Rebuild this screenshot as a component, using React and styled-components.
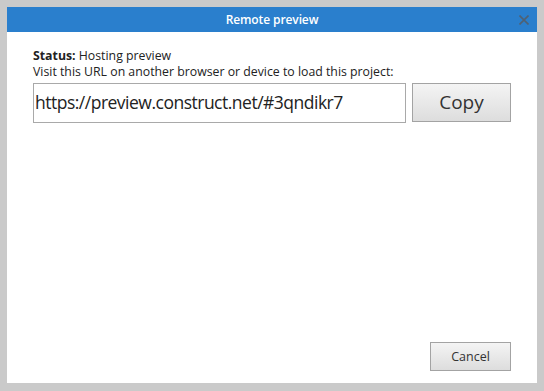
import React from "react";
import styled, { createGlobalStyle } from "styled-components";

const Global = createGlobalStyle`
  html, body { margin: 0; padding: 0; background: #cacaca; }
  body { font-family: "Open Sans", "Noto Sans", sans-serif; }
  #root { padding: 7px 7px 8px 7px; }
`;

const Dialog = styled.div`
  width: 530px;
  height: 376px;
  background: #ffffff;
  display: flex;
  flex-direction: column;
`;

const TitleBar = styled.div`
  height: 25px;
  background: #2a7fcd;
  display: flex;
  align-items: center;
  justify-content: center;
  position: relative;
  color: #ffffff;
  font-size: 12px;
  font-weight: 600;
  letter-spacing: -0.1px;
`;

const Close = styled.span`
  position: absolute;
  right: 8px;
  top: 8px;
  width: 10px;
  height: 10px;
  display: flex;
  cursor: pointer;
`;

const Body = styled.div`
  flex: 1;
  display: flex;
  flex-direction: column;
  padding: 16px 26px 12px 26px;
`;

const Line = styled.div`
  font-size: 12.3px;
  line-height: 16px;
  color: #222;
  white-space: nowrap;
`;

const Label = styled.b`
  font-weight: 700;
`;

const UrlRow = styled.div`
  display: flex;
  gap: 6px;
  margin-top: 3px;
  align-items: flex-start;
`;

const UrlInput = styled.input`
  width: 373px;
  height: 40px;
  box-sizing: border-box;
  border: 1px solid #a9a9a9;
  padding: 0 0 3px 1px;
  font-family: "Open Sans", "Noto Sans", sans-serif;
  font-size: 17.5px;
  letter-spacing: -0.5px;
  color: #222;
  outline: none;
  margin: 0;
`;

const Button = styled.button`
  box-sizing: border-box;
  width: ${(p) => p.$w}px;
  height: ${(p) => p.$h}px;
  border: 1px solid #a3a3a3;
  background: linear-gradient(#f4f4f4, #dddddd);
  font-family: "Open Sans", "Noto Sans", sans-serif;
  font-size: ${(p) => p.$fs}px;
  color: #333;
  padding: 0 0 1px 0;
  margin: 0;
  cursor: pointer;
`;

const Spacer = styled.div`
  flex: 1;
`;

const Footer = styled.div`
  display: flex;
  justify-content: flex-end;
`;

export default function App() {
  return (
    <>
      <Global />
      <Dialog>
        <TitleBar>
          Remote preview
          <Close aria-label="Close">
            <svg width="10" height="10" viewBox="0 0 10 10">
              <path d="M0.5 0.5 L9.5 9.5 M9.5 0.5 L0.5 9.5" stroke="#4f6173" strokeWidth="1.6" />
            </svg>
          </Close>
        </TitleBar>
        <Body>
          <Line>
            <Label>Status:</Label> Hosting preview
          </Line>
          <Line>Visit this URL on another browser or device to load this project:</Line>
          <UrlRow>
            <UrlInput readOnly value="https://preview.construct.net/#3qndikr7" />
            <Button $w={99} $h={39} $fs={19}>Copy</Button>
          </UrlRow>
          <Spacer />
          <Footer>
            <Button $w={81} $h={29} $fs={12.5}>Cancel</Button>
          </Footer>
        </Body>
      </Dialog>
    </>
  );
}
